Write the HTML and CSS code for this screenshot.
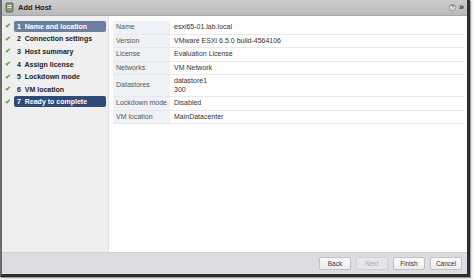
FILE: index.html
```html
<!DOCTYPE html>
<html>
<head>
<meta charset="utf-8">
<link rel="stylesheet" href="styles.css">
</head>
<body>
<div class="frame">
  <div class="window">
    <div class="titlebar">
      <svg class="ticon" width="9" height="11" viewBox="0 0 9 11"><rect x="1" y="1" width="7" height="9" rx="1" fill="#8a9a7a" stroke="#4c5a44" stroke-width="0.8"/><rect x="2.5" y="3" width="4" height="1" fill="#e8eee0"/><rect x="2.5" y="5" width="4" height="1" fill="#e8eee0"/></svg>
      <span class="title">Add Host</span>
      <span class="spacer"></span>
      <span class="help">?</span>
      <span class="more">»</span>
    </div>
    <div class="main">
      <div class="steps">
        <div class="step active"><span class="chk">✔</span><span class="lbl">1&nbsp; Name and location</span></div>
        <div class="step"><span class="chk">✔</span><span class="lbl">2&nbsp; Connection settings</span></div>
        <div class="step"><span class="chk">✔</span><span class="lbl">3&nbsp; Host summary</span></div>
        <div class="step"><span class="chk">✔</span><span class="lbl">4&nbsp; Assign license</span></div>
        <div class="step"><span class="chk">✔</span><span class="lbl">5&nbsp; Lockdown mode</span></div>
        <div class="step"><span class="chk">✔</span><span class="lbl">6&nbsp; VM location</span></div>
        <div class="step current"><span class="chk">✔</span><span class="lbl">7&nbsp; Ready to complete</span></div>
      </div>
      <div class="content">
        <table class="summary">
          <tr><td class="k">Name</td><td class="v">esxi65-01.lab.local</td></tr>
          <tr><td class="k">Version</td><td class="v">VMware ESXi 6.5.0 build-4564106</td></tr>
          <tr><td class="k">License</td><td class="v">Evaluation License</td></tr>
          <tr><td class="k">Networks</td><td class="v">VM Network</td></tr>
          <tr><td class="k">Datastores</td><td class="v">datastore1<br>300</td></tr>
          <tr><td class="k">Lockdown mode</td><td class="v">Disabled</td></tr>
          <tr><td class="k">VM location</td><td class="v">MainDatacenter</td></tr>
        </table>
      </div>
    </div>
    <div class="footer">
      <button class="btn">Back</button>
      <button class="btn disabled">Next</button>
      <button class="btn">Finish</button>
      <button class="btn">Cancel</button>
    </div>
  </div>
</div>
</body>
</html>
```
FILE: styles.css
```css
* { box-sizing: border-box; }
html, body { margin: 0; padding: 0; }
body {
  width: 474px;
  height: 280px;
  background: #f4f4f4;
  font-family: "Liberation Sans", Arial, sans-serif;
  font-size: 7px;
  color: #333;
  overflow: hidden;
}
.frame {
  width: 470px;
  height: 277px;
  border-right: 3px solid #2e2e2e;
  border-bottom: 3px solid #2e2e2e;
  border-left: 2px solid #6a6a6a;
  box-shadow: 1px 1px 1px #999;
}
.window {
  display: flex;
  flex-direction: column;
  height: 100%;
  background: #fff;
}
.titlebar {
  height: 16px;
  flex: none;
  display: flex;
  align-items: center;
  padding: 0 3px 0 3px;
  background: linear-gradient(#cdcdcd, #b9b9b9);
  border-bottom: 1px solid #a8a8a8;
}
.ticon { margin-right: 4px; }
.title { font-weight: bold; font-size: 7.5px; color: #222; }
.spacer { flex: 1; }
.help {
  width: 7px; height: 7px; border-radius: 50%;
  border: 1px solid #888; background: #eee;
  font-size: 5px; line-height: 5px; text-align: center; color: #555; font-weight: bold;
  margin-right: 3px;
}
.more { font-size: 9px; line-height: 7px; color: #333; font-weight: bold; }
.main {
  flex: 1;
  display: flex;
  min-height: 0;
}
.steps {
  width: 107px;
  flex: none;
  background: #efefef;
  border-right: 1px solid #e2e2e2;
  padding: 4px 0 0 3px;
}
.step {
  height: 12.6px;
  display: flex;
  align-items: center;
  font-weight: bold;
  color: #222;
}
.chk {
  width: 9px;
  color: #5aa634;
  font-size: 7px;
  flex: none;
}
.lbl {
  flex: 1;
  height: 11px;
  line-height: 11px;
  padding-left: 3px;
  margin-right: 2px;
  border-radius: 2px;
}
.step.active .lbl {
  background: #6c7f9c;
  color: #fff;
}
.step.current .lbl {
  background: #2f4a78;
  color: #fff;
}
.content {
  flex: 1;
  padding: 5px 3px 0 4px;
}
.summary {
  width: 100%;
  border-collapse: collapse;
}
.summary td {
  border-bottom: 1px solid #e8e8e8;
  padding: 2px 3px;
  height: 12.5px;
  vertical-align: middle;
  line-height: 8.5px;
}
.summary .k {
  width: 57px;
  background: #eef1f5;
  color: #555;
}
.summary .v { color: #333; padding-left: 4px; }
.footer {
  height: 22px;
  flex: none;
  display: flex;
  justify-content: flex-end;
  align-items: center;
  gap: 5px;
  padding-right: 5px;
  background: #dcdde3;
  border-top: 1px solid #cfd0d6;
}
.btn {
  width: 32px;
  height: 13px;
  padding: 0;
  font-family: "Liberation Sans", Arial, sans-serif;
  font-size: 6.5px;
  color: #333;
  background: linear-gradient(#fbfbfb, #ececec);
  border: 1px solid #c0c0c0;
  border-radius: 2px;
}
.btn.disabled { color: #aaa; background: #e6e7ea; border-color: #d0d0d4; }
```
